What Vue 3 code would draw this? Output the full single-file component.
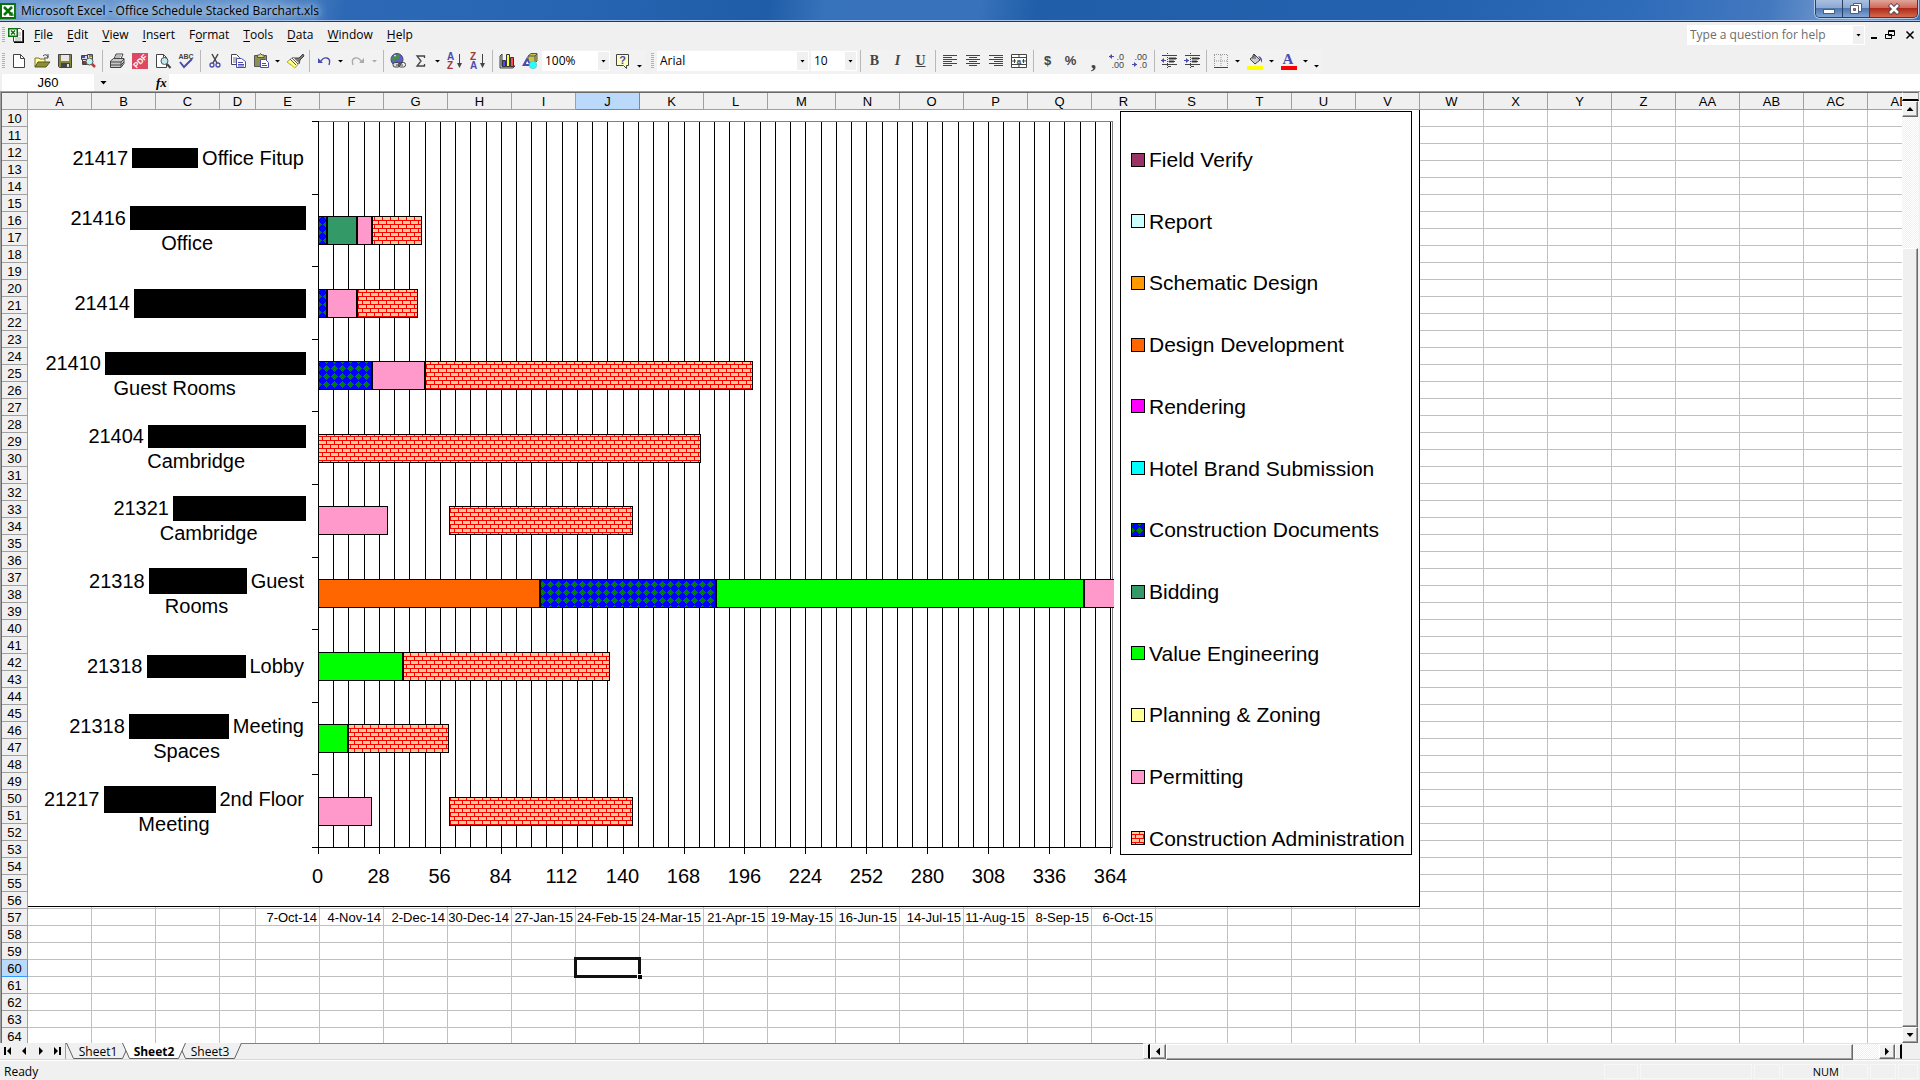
<script setup>
import { ref } from 'vue'

const icons = {
  blank: '<path d="M2.5 1.500h7l4 4v9h-11z" fill="#fff" stroke="#444"/><path d="M9.500 1.500v4h4" fill="none" stroke="#444"/>',
  open: '<path d="M1 14V5h4l1 1h5v3" fill="#ffff9c" stroke="#77772a"/><path d="M1 14l3-5h12l-4 5z" fill="#8e8e33" stroke="#55551f"/><path d="M9 3q3-3 5 1M14 1v4h-4" fill="none" stroke="#444"/>',
  save: '<path d="M1.500 1.500h13v13h-12l-1-1z" fill="#85853b" stroke="#444"/><path d="M4 2h8v6H4z" fill="#e8e8e8"/><path d="M4 10h9v4H4z" fill="#444"/><path d="M10 11h2v3h-2z" fill="#ddd"/>',
  research: '<path d="M1.500 2.500h6v4h-6zM7.500 1.500h5v5h-5zM2.500 6.500h5v5h-5z" fill="#ddd" stroke="#444"/><path d="M2 3h3v2H2z" fill="#4b4bb0"/><path d="M9 2h3v2H9z" fill="#8e8e33"/><path d="M3 8h3v3H3z" fill="#933"/><circle cx="9.500" cy="8.500" r="3.500" fill="#b9f4f8" stroke="#555"/><path d="M12 11l3 3" stroke="#c33" stroke-width="2.500"/>',
  print: '<path d="M5 6l2-5h7l-2 5" fill="#fff" stroke="#444"/><path d="M7 3h5M6 5h5" stroke="#777"/><path d="M1.500 8l3-2.500h10.500v5L12 14.500H1.500z" fill="#c9c9c9" stroke="#444"/><path d="M2 9h10l3-3M2 12h10l3-3M12 9v5" fill="none" stroke="#444"/><path d="M8 10.500h3" stroke="#dd0"/>',
  pdf: '<path d="M0 0h16v16H0z" fill="#dc4a62"/><text x="8" y="11" text-anchor="middle" font-family="Liberation Sans,sans-serif" font-weight="700" font-size="8" fill="#fff" transform="rotate(-45 8 8)">PDF</text>',
  preview: '<path d="M1.500 1.500h7l3 3v10h-10z" fill="#fff" stroke="#444"/><path d="M8.500 1.500v3h3" fill="none" stroke="#444"/><circle cx="9.500" cy="8" r="3.500" fill="#bfe9ec" stroke="#555"/><path d="M12 11l3.500 4" stroke="#444" stroke-width="2"/>',
  spell: '<text x="8" y="6" text-anchor="middle" font-family="Liberation Sans,sans-serif" font-size="7" font-weight="700" fill="#444">ABC</text><path d="M2 9l4 5 8-8" fill="none" stroke="#4b4bb0" stroke-width="2"/>',
  cut: '<path d="M5 1l5 9M11 1l-5 9" stroke="#444" stroke-width="1.500"/><circle cx="5" cy="12" r="2" fill="none" stroke="#4b4bb0" stroke-width="1.300"/><circle cx="11" cy="12" r="2" fill="none" stroke="#4b4bb0" stroke-width="1.300"/>',
  copy: '<path d="M1.500 1.500h5l3 3v7h-8z" fill="#fff" stroke="#444"/><path d="M3 5h4M3 7h4M3 9h4" stroke="#777"/><path d="M6.500 5.500h5l4 3v6h-9z" fill="#fff" stroke="#4b4bb0"/><path d="M8 9.500h5M8 11.500h6M8 13h6" stroke="#4b4bb0"/>',
  paste: '<path d="M1.500 2.500h12v11h-12z" fill="#8e8e5a" stroke="#555"/><path d="M4.500 4.500V2h2l1-1.500L9 2h2v2.500z" fill="#dd8" stroke="#555"/><path d="M7.500 6.500h5l3 3v5h-8z" fill="#fff" stroke="#4b4bb0"/><path d="M9 10.500h4M9 12.500h5" stroke="#4b4bb0"/>',
  brush: '<path d="M16 1l-4 4-2 0-4 0 6 6 1-4 4-4z" fill="#777" stroke="#444"/><path d="M6 4l6 6-4 5-8-6z" fill="#ffffb0" stroke="#998"/><path d="M5 5l6 6M3 6l6 6" stroke="#555"/><path d="M1 9l7 6" stroke="#ee0" stroke-dasharray="1 1" stroke-width="2"/>',
  undo: '<path d="M4 9.500Q7 4 11 5t2 7" fill="none" stroke="#4b4bb0" stroke-width="1.400"/><path d="M2 5l5 5H2z" fill="#4b4bb0"/>',
  redo: '<path d="M12 9.500Q9 4 5 5t-2 7" fill="none" stroke="#aaa" stroke-width="1.400"/><path d="M14 5l-5 5h5z" fill="#aaa"/>',
  link: '<circle cx="7" cy="6.500" r="6" fill="#5b5be0" stroke="#446"/><path d="M4 2l5-1 1 3-2 3-2-1-2 3-3-3z" fill="#4a8a4a"/><path d="M4 3q1-1 2 0" stroke="#fff"/><rect x="3" y="9.500" width="7" height="4.500" rx="2" fill="#ddd" stroke="#444"/><rect x="8.500" y="9.500" width="7" height="4.500" rx="2" fill="none" stroke="#444"/><path d="M6 12h7" stroke="#444"/>',
  sum: '<path d="M11.500 5V3H4l4 5-4 5h7.500v-2" fill="none" stroke="#444" stroke-width="1.300"/>',
  sortAz: '<g font-family="Liberation Sans,sans-serif" font-weight="700" font-size="10"><text x="0" y="7" fill="#4b4bb0">A</text><text x="0" y="16" fill="#a03a3a">Z</text></g><path d="M12.500 1v12" stroke="#444"/><path d="M10 10h5l-2.500 5z" fill="#444"/>',
  sortZa: '<g font-family="Liberation Sans,sans-serif" font-weight="700" font-size="10"><text x="0" y="7" fill="#a03a3a">Z</text><text x="0" y="16" fill="#4b4bb0">A</text></g><path d="M12.500 1v12" stroke="#444"/><path d="M10 10h5l-2.500 5z" fill="#444"/>',
  chart: '<path d="M1 3l2-2v12h13l-2 2H1z" fill="#bbb" stroke="#444"/><path d="M3.500 7.500h3v6h-3z" fill="#4b4bff" stroke="#333"/><path d="M7.500 1.500h3v12h-3z" fill="#ff3" stroke="#333"/><path d="M11.500 4.500h3v9h-3z" fill="#ff4b4b" stroke="#333"/>',
  drawing: '<path d="M6 3l3-2.500h6V8l-2 2H6z" fill="#c5c54a" stroke="#555"/><path d="M6 3h7v7M13 3l2-2" fill="none" stroke="#555"/><path d="M0 13L5 4l5 9z" fill="#4b4bb0"/><path d="M4 11l1-3 2 3z" fill="#fff"/><circle cx="11" cy="12" r="3.800" fill="#2ff" stroke="#999" stroke-width=".5"/>',
  help: '<path d="M1.500 1.500h12v11h-2v3l-3-3h-7z" fill="#ffffc0" stroke="#444"/><text x="7.500" y="11" text-anchor="middle" font-family="Liberation Sans,sans-serif" font-weight="700" font-size="11" fill="#4b4bb0">?</text>',
  left: '<path d="M1 2.500h14M1 4.500h9M1 6.500h14M1 8.500h9M1 10.500h14M1 12.500h9" stroke="#444"/>',
  center: '<path d="M1 2.500h14M4 4.500h8M1 6.500h14M4 8.500h8M1 10.500h14M4 12.500h8" stroke="#444"/>',
  right: '<path d="M1 2.500h14M6 4.500h9M1 6.500h14M6 8.500h9M1 10.500h14M6 12.500h9" stroke="#444"/>',
  merge: '<path d="M.5 1.500h15v13H.5zM.5 4.500h15M.5 11.500h15M8 1v3M8 12v3" fill="#fff" stroke="#444"/><path d="M1 8h4M11 8h4M3.500 6v4M12.500 6v4" stroke="#444"/><text x="8" y="10.500" text-anchor="middle" font-family="Liberation Sans,sans-serif" font-size="8" font-weight="700" fill="#444">a</text>',
  moreDec: '<path d="M0 3.500h5" stroke="#4b4bb0"/><path d="M3 1v5L0 3.500z" fill="#4b4bb0"/><g font-family="Liberation Sans,sans-serif" font-size="9" fill="#444"><text x="15" y="7" text-anchor="end">.0</text><text x="15" y="15" text-anchor="end">.00</text></g>',
  lessDec: '<path d="M0 11.500h5" stroke="#4b4bb0"/><path d="M2 9v5l3-2.500z" fill="#4b4bb0"/><g font-family="Liberation Sans,sans-serif" font-size="9" fill="#444"><text x="15" y="7" text-anchor="end">.00</text><text x="15" y="15" text-anchor="end">.0</text></g>',
  outdent: '<path d="M1 2.500h15M8 5.500h8M8 8.500h6M1 11.500h15M7 13.500h3" stroke="#444"/><path d="M8 5h7v1H8zM8 8h5v1H8z" stroke="#444"/><path d="M6.500 0v16" stroke="#444" stroke-dasharray="1 1"/><path d="M0 7.500h5" stroke="#4b4bb0"/><path d="M3 5v5L0 7.500z" fill="#4b4bb0"/>',
  indent: '<path d="M1 2.500h15M8 5.500h8M8 8.500h6M1 11.500h15M7 13.500h3" stroke="#444"/><path d="M8 5h7v1H8zM8 8h5v1H8z" stroke="#444"/><path d="M6.500 0v16" stroke="#444" stroke-dasharray="1 1"/><path d="M0 7.500h5" stroke="#4b4bb0"/><path d="M2 5v5l3-2.500z" fill="#4b4bb0"/>',
  border: '<path d="M1.500 2v12M8 2v12M14.500 2v12M1 1.500h14M1 8h14" stroke="#999" stroke-dasharray="1 1"/><path d="M1 14.500h14" stroke="#444"/>',
  fill: '<path d="M3 6l5-4 5 5-5 4z" fill="#ccc" stroke="#444"/><path d="M6 6V2q1-2 2 0v4" fill="none" stroke="#444"/><path d="M11 3q5 1 4 7l-2-4z" fill="#4b4bb0"/><path d="M0 13h16v4H0z" fill="#ff0"/>',
  fontColor: '<text x="7" y="11" text-anchor="middle" font-family="Liberation Serif,serif" font-weight="700" font-size="15" fill="#4b4bb0">A</text><path d="M0 13h16v4H0z" fill="#f00"/>',
  excel: '<path d="M0 0h16v16H0z" fill="#0a700a"/><path d="M2 2h12v12H2z" fill="#fff"/><path d="M4 4l8 8M12 4l-8 8" stroke="#0a700a" stroke-width="2.500"/><path d="M9 12h5M12 9v4" stroke="#0a700a"/>',
  workbook: '<path d="M6 3h10v13H6z" fill="#000"/><path d="M5.500 1.500h7l2 2v11h-9z" fill="#fff" stroke="#444"/><path d="M10 6h3M10 8h3M7 11h6M7 13h6" stroke="#aaa"/><path d="M0 1h10v9H0z" fill="#0a700a"/><path d="M1.500 2.500h7v6h-7z" fill="#fff"/><path d="M3 3.500l4 4M7 3.500l-4 4" stroke="#0a700a" stroke-width="1.500"/>'
}

const b = (label, icon) => ({ kind: 'icon', label, icon })
const t = (label, text, cls) => ({ kind: 'text', label, text, cls })
const more = (label, cls = '') => ({ kind: 'more', label, cls })
const sep = { kind: 'sep' }
const combo = (label, value, cls) => ({ kind: 'combo', label, value, cls })

const standardBar = [
  b('New', 'blank'), b('Open', 'open'), b('Save', 'save'), b('Search', 'research'), sep,
  b('Print', 'print'), b('Convert to PDF', 'pdf'), b('Print Preview', 'preview'), b('Spelling', 'spell'), sep,
  b('Cut', 'cut'), b('Copy', 'copy'), b('Paste', 'paste'), more('Paste options'), b('Format Painter', 'brush'), sep,
  b('Undo', 'undo'), more('Undo list'), b('Redo', 'redo'), more('Redo list', 'dim'), sep,
  b('Insert Hyperlink', 'link'), b('AutoSum', 'sum'), more('AutoSum options'), b('Sort Ascending', 'sortAz'), b('Sort Descending', 'sortZa'), sep,
  b('Chart Wizard', 'chart'), b('Drawing', 'drawing'), combo('Zoom', '100%', 'zoom'), b('Help', 'help'), more('Toolbar options', 'low')
]
const formatBar = [
  combo('Font', 'Arial', 'font'), combo('Font Size', '10', 'size'), sep,
  t('Bold', 'B', ''), t('Italic', 'I', 'it'), t('Underline', 'U', 'un'), sep,
  b('Align Left', 'left'), b('Center', 'center'), b('Align Right', 'right'), b('Merge and Center', 'merge'), sep,
  t('Currency Style', '$', 'sans'), t('Percent Style', '%', 'sans'), t('Comma Style', ',', 'comma'),
  b('Increase Decimal', 'moreDec'), b('Decrease Decimal', 'lessDec'), sep,
  b('Decrease Indent', 'outdent'), b('Increase Indent', 'indent'), sep,
  b('Borders', 'border'), more('Border options'), b('Fill Color', 'fill'), more('Fill colors'),
  b('Font Color', 'fontColor'), more('Font colors'), more('Toolbar options', 'low')
]

const menus = [
  ['', 'F', 'ile'], ['', 'E', 'dit'], ['', 'V', 'iew'], ['', 'I', 'nsert'], ['F', 'o', 'rmat'],
  ['', 'T', 'ools'], ['', 'D', 'ata'], ['', 'W', 'indow'], ['', 'H', 'elp']
]

const names = [...'ABCDEFGHIJKLMNOPQRSTUVWXYZ', 'AA', 'AB', 'AC', 'AD']
const widths = { D: 36, M: 68, S: 72 }
const columns = names.map(name => ({ name, width: widths[name] || 64 }))
const tableWidth = 26 + columns.reduce((sum, c) => sum + c.width, 0)
const rows = Array.from({ length: 55 }, (_, i) => i + 10)
const dates = ['7-Oct-14', '4-Nov-14', '2-Dec-14', '30-Dec-14', '27-Jan-15', '24-Feb-15', '24-Mar-15',
  '21-Apr-15', '19-May-15', '16-Jun-15', '14-Jul-15', '11-Aug-15', '8-Sep-15', '6-Oct-15']
const cellText = (row, col) => (row === 57 && col >= 4 ? dates[col - 4] || '' : '')

const legend = [
  ['Field Verify', '#993366'], ['Report', '#ccffff'], ['Schematic Design', '#ff9900'],
  ['Design Development', '#ff6600'], ['Rendering', '#ff00ff'], ['Hotel Brand Submission', '#00ffff'],
  ['Construction Documents', 'url(#diamond)'], ['Bidding', '#339966'], ['Value Engineering', '#00ff00'],
  ['Planning & Zoning', '#ffff99'], ['Permitting', '#ff99cc'], ['Construction Administration', 'url(#brick)']
]
const DD = '#ff6600', CD = 'url(#diamond)', BID = '#339966', VE = '#00ff00', PER = '#ff99cc', CA = 'url(#brick)'

// Each segment is [start day, end day, fill].
const projects = [
  { id: '21417', mask: [66, 20], tail: 'Office Fitup', segs: [] },
  { id: '21416', mask: [176, 24], second: 'Office', segs: [[0, 4, CD], [4, 18, BID], [18, 25, PER], [25, 48, CA]] },
  { id: '21414', mask: [172, 29], segs: [[0, 4, CD], [4, 18, PER], [18, 46, CA]] },
  { id: '21410', mask: [201, 23], second: 'Guest Rooms', segs: [[0, 25, CD], [25, 49, PER], [49, 200, CA]] },
  { id: '21404', mask: [158, 23], second: 'Cambridge', segs: [[0, 176, CA]] },
  { id: '21321', mask: [133, 25], second: 'Cambridge', segs: [[0, 32, PER], [60, 145, CA]] },
  { id: '21318', mask: [98, 26], tail: 'Guest', second: 'Rooms', segs: [[0, 102, DD], [102, 183, CD], [183, 352, VE], [352, 370, PER]] },
  { id: '21318', mask: [99, 23], tail: 'Lobby', segs: [[0, 39, VE], [39, 134, CA]] },
  { id: '21318', mask: [100, 25], tail: 'Meeting', second: 'Spaces', segs: [[0, 14, VE], [14, 60, CA]] },
  { id: '21217', mask: [112, 27], tail: '2nd Floor', second: 'Meeting', segs: [[0, 25, PER], [60, 145, CA]] }
]
const dayX = d => Math.round(d * 792 / 364)
const rowY = i => Math.round(i * 72.6)
const bars = projects.flatMap((p, i) => p.segs.map(([a, z, fill]) => {
  const x = dayX(a)
  return { x, y: rowY(i + 0.5) - 14, w: dayX(z) - 1 - x, fill }
}))
const gridDays = Array.from({ length: 53 }, (_, i) => i * 7)
const majorDays = gridDays.filter(d => d % 28 === 0)

const sheets = ['Sheet1', 'Sheet2', 'Sheet3']
const active = ref('Sheet2')
</script>

<template>
  <div class="app">
    <header class="title">
      <svg class="ico" viewBox="0 0 16 16" v-html="icons.excel"></svg>
      <h1>Microsoft Excel - Office Schedule Stacked Barchart.xls</h1>
      <div class="caption">
        <button aria-label="Minimize"><svg width="14" height="12"><rect x="1.500" y="6.500" width="11" height="4" fill="#fff" stroke="#555b70" /></svg></button>
        <button aria-label="Restore"><svg width="14" height="13"><path d="M4.500 1.500h8v8h-8z" fill="#fff" stroke="#555b70" /><path d="M1.500 3.500h8v8h-8z" fill="#fff" stroke="#555b70" /><path d="M4.500 6.500h2v2h-2z" fill="#6c8fc0" stroke="#555b70" /></svg></button>
        <button class="close" aria-label="Close"><svg width="14" height="12"><path d="M2.500 1.500l9 9M11.500 1.500l-9 9" stroke="#55404a" stroke-width="4.500" /><path d="M3 2l8 8M11 2l-8 8" stroke="#fff" stroke-width="2.500" /></svg></button>
      </div>
    </header>

    <nav class="menubar">
      <i class="grip"></i>
      <svg class="ico" viewBox="0 0 16 16" v-html="icons.workbook"></svg>
      <button v-for="m in menus" :key="m.join('')">{{ m[0] }}<u>{{ m[1] }}</u>{{ m[2] }}</button>
      <div class="ask">
        <input aria-label="Type a question for help" placeholder="Type a question for help">
        <button aria-label="Recent questions"><i class="tri"></i></button>
      </div>
      <div class="mdi">
        <button aria-label="Minimize workbook"><svg width="10" height="10"><path d="M2 7h6v2H2z" /></svg></button>
        <button aria-label="Restore workbook"><svg width="10" height="10"><path d="M3.500.5h6v5h-6zM3 1.500h7M.5 4.500h6v4h-6zM0 4.500h7" fill="#f0f0f0" stroke="#000" /></svg></button>
        <button aria-label="Close workbook"><svg width="10" height="10"><path d="M1.500 1.500l7 7M8.500 1.500l-7 7" stroke="#000" stroke-width="1.500" /></svg></button>
      </div>
    </nav>

    <div class="toolbars">
      <div v-for="(bar, n) in [standardBar, formatBar]" :key="n" class="toolbar">
        <i class="grip"></i>
        <template v-for="(item, i) in bar" :key="i">
          <i v-if="item.kind === 'sep'" class="sep"></i>
          <button v-else-if="item.kind === 'icon'" class="tool" :aria-label="item.label">
            <svg class="ico" viewBox="0 0 16 16" v-html="icons[item.icon]"></svg>
          </button>
          <button v-else-if="item.kind === 'text'" class="tool letter" :class="item.cls" :aria-label="item.label">{{ item.text }}</button>
          <button v-else-if="item.kind === 'more'" class="more" :class="item.cls" :aria-label="item.label"><i class="tri"></i></button>
          <label v-else class="combo" :class="item.cls">
            <select :aria-label="item.label"><option>{{ item.value }}</option></select>
            <span><i class="tri"></i></span>
          </label>
        </template>
      </div>
    </div>

    <div class="formula">
      <input class="name" aria-label="Name Box" value="J60">
      <button class="drop" aria-label="Name list"><i class="tri wide"></i></button>
      <button class="fx" aria-label="Insert Function">fx</button>
      <input class="entry" aria-label="Formula">
    </div>

    <main class="work">
      <div class="pane">
        <table :style="{ width: tableWidth + 'px' }">
          <colgroup>
            <col class="rowcol">
            <col v-for="c in columns" :key="c.name" :style="{ width: c.width + 'px' }">
          </colgroup>
          <thead>
            <tr>
              <th></th>
              <th v-for="c in columns" :key="c.name" :class="{ on: c.name === 'J' }" scope="col">{{ c.name }}</th>
            </tr>
          </thead>
          <tbody>
            <tr v-for="r in rows" :key="r">
              <th :class="{ on: r === 60 }" scope="row">{{ r }}</th>
              <td v-for="(c, i) in columns" :key="c.name" :class="{ cursor: r === 60 && c.name === 'J' }">{{ cellText(r, i) }}</td>
            </tr>
          </tbody>
        </table>

        <section class="chart">
          <div class="labels">
            <div v-for="(p, i) in projects" :key="i" class="project">
              <div>
                <div class="line" :class="{ bare: !p.tail }">
                  <span>{{ p.id }}</span>
                  <i class="mask" :style="{ width: p.mask[0] + 'px', height: p.mask[1] + 'px' }"></i>
                  <span v-if="p.tail">{{ p.tail }}</span>
                </div>
                <div v-if="p.second" class="second">{{ p.second }}</div>
              </div>
            </div>
          </div>
          <div class="plot">
            <svg width="802" height="733" viewBox="-6 0 802 733" shape-rendering="crispEdges">
              <defs>
                <pattern id="brick" width="8" height="8" patternUnits="userSpaceOnUse">
                  <path d="M0 0h8v8H0z" fill="#ffcc99" />
                  <path d="M0 3h8v1H0zM0 7h8v1H0zM0 0h1v3H0zM4 4h1v3H4z" fill="#f00" />
                </pattern>
                <pattern id="diamond" x="-3" y="4" width="8" height="8" patternUnits="userSpaceOnUse">
                  <path d="M0 0h8v8H0z" fill="#00f" />
                  <path d="M3 0h1v1H3zM2 1h3v1H2zM1 2h5v1H1zM0 3h7v1H0zM1 4h5v1H1zM2 5h3v1H2zM3 6h1v1H3z" fill="#008000" />
                </pattern>
              </defs>
              <path d="M0 0h795v727h-1V1H0z" fill="#808080" />
              <rect v-for="d in gridDays" :key="d" :x="dayX(d)" :y="d ? 1 : 0" width="1" height="726" />
              <rect v-for="d in majorDays" :key="'m' + d" :x="dayX(d)" y="726" width="1" height="7" />
              <rect v-for="n in 11" :key="'t' + n" x="-6" :y="rowY(n - 1)" width="6" height="1" />
              <rect x="0" y="726" width="794" height="1" />
              <rect v-for="(s, i) in bars" :key="'b' + i" :x="s.x + 0.5" :y="s.y + 0.5" :width="s.w" height="28" :fill="s.fill" stroke="#000" />
            </svg>
            <div class="axis"><span v-for="d in majorDays" :key="d">{{ d }}</span></div>
          </div>
          <ul class="legend">
            <li v-for="[name, fill] in legend" :key="name">
              <svg width="14" height="14"><rect x=".5" y=".5" width="13" height="13" :fill="fill" stroke="#000" /></svg>{{ name }}
            </li>
          </ul>
        </section>
      </div>

      <div class="vscroll">
        <i class="split"></i>
        <button aria-label="Scroll up"><i class="tri up"></i></button>
        <i class="track"></i>
        <i class="thumb"></i>
        <button aria-label="Scroll down"><i class="tri down"></i></button>
      </div>
    </main>

    <div class="tabrow">
      <div class="nav">
        <button aria-label="First sheet"><svg width="8" height="8"><path d="M0 0h2v8H0zM7 0v8L3 4z" /></svg></button>
        <button aria-label="Previous sheet"><svg width="8" height="8"><path d="M6 0v8L2 4z" /></svg></button>
        <button aria-label="Next sheet"><svg width="8" height="8"><path d="M2 0v8l4-4z" /></svg></button>
        <button aria-label="Last sheet"><svg width="8" height="8"><path d="M6 0h2v8H6zM1 0v8l4-4z" /></svg></button>
      </div>
      <div class="tabs">
        <button v-for="s in sheets" :key="s" :class="{ active: s === active }" @click="active = s">
          <svg viewBox="0 0 64 16"><path d="M.5 0L7.500 15.500h49L63.500 0" /></svg><span>{{ s }}</span>
        </button>
      </div>
      <div class="hscroll">
        <i class="split"></i>
        <button aria-label="Scroll left"><i class="tri lt"></i></button>
        <i class="thumb"></i>
        <i class="track"></i>
        <button aria-label="Scroll right"><i class="tri rt"></i></button>
        <i class="split end"></i>
      </div>
      <i class="corner"></i>
    </div>

    <footer class="status">
      <span class="ready">Ready</span>
      <i class="p34"></i><i class="p112"></i><i class="p26"></i><span class="num">NUM</span><i class="p26"></i><i class="p26"></i><i class="p20"></i>
    </footer>
  </div>
</template>

<style>
body { margin: 0; overflow: hidden; }
</style>

<style scoped>
.app {
  display: flex; flex-direction: column; height: 100vh; overflow: hidden;
  background: #f0f0f0; color: #000; font: 12px/16px "Open Sans", "Noto Sans", sans-serif;
}
.app *, .app *::before { box-sizing: border-box; }
button { padding: 0; border: 0; background: none; color: inherit; font: inherit; }
input, select { border: 0; border-radius: 0; outline: 0; font: inherit; color: inherit; background: #fff; min-width: 0; }
svg { display: block; flex: none; }
.ico { width: 16px; height: 16px; overflow: visible; }
i { display: block; flex: none; }

.title {
  display: flex; align-items: center; flex: none; height: 22px; gap: 5px;
  border-bottom: 1px solid #1d3a63; box-shadow: inset 0 -1px #a9c3e6;
  background: linear-gradient(100deg, #6d9bd0 0, #5f90ca 14%, #2c68b5 18%, #2866b4 28%, #205da8 40%, #3773bb 43%, #3772ba 51%, #205ea9 54%, #2462b0 75%, #2e6bb9 85%, #4378bf 92%, #83a4d4 97%, #3f70b4 100%);
}
.title h1 {
  flex: 1; margin: 0; font-size: 12px; font-weight: 400; white-space: nowrap; line-height: 20px;
  text-shadow: 0 0 8px #c5d8f0, 0 0 8px #c5d8f0, 0 0 12px #b5cdea;
}
.caption { display: flex; align-self: flex-start; height: 18px; margin-right: 2px; border: 1px solid #2b3f63; border-top: 0; border-radius: 0 0 5px 5px; box-shadow: 0 0 0 1px #b4cae8; overflow: hidden; }
.caption button { display: flex; align-items: center; justify-content: center; width: 27px; border-right: 1px solid #2b3f63; background: linear-gradient(#a9c0e0, #8ca9d3 45%, #5077ae 50%, #7fa6d6); }
.caption .close { width: 47px; border: 0; background: linear-gradient(#e0a59a, #cf6a5a 45%, #b02a1a 50%, #d56a4a); }

.menubar { display: flex; align-items: center; flex: none; height: 28px; padding: 0 0 2px 2px; }
.grip { width: 3px; height: 16px; background: repeating-linear-gradient(#b4b4b4 0 1px, #f0f0f0 1px 2px); }
.menubar .ico { margin: 0 3px 0 3px; }
.menubar > button { padding: 0 7px; height: 20px; }
u { text-underline-offset: 2px; }
.ask { display: flex; margin: 0 4px 0 auto; width: 178px; height: 20px; padding: 1px; background: #fff; }
.ask input { flex: 1; padding: 0 2px; }
.ask input::placeholder { color: #6d6d6d; opacity: 1; }
.ask button { width: 11px; background: #f0f0f0; }
.mdi { display: flex; gap: 10px; padding-right: 5px; }
.mdi button:first-child { margin-right: -4px; }

.tri { width: 5px; height: 3px; margin: auto; background: #000; clip-path: polygon(0 0, 100% 0, 50% 100%); }
.tri.wide { width: 7px; height: 4px; }
.toolbars { display: flex; flex: none; height: 24px; gap: 6px; }
.toolbar { display: flex; align-items: center; padding-bottom: 2px; background: #f2f2f2; }
.toolbar .grip { margin: 0 2px; }
.toolbar:last-child .grip { margin: 0 3px 0 0; }
.sep { width: 6px; height: 22px; background: linear-gradient(#b8b8b8, #b8b8b8) 3px 0 / 1px 100% no-repeat; }
.tool { display: flex; align-items: center; justify-content: center; flex: none; width: 23px; height: 22px; }
.more { flex: none; width: 11px; height: 22px; }
.more .tri { width: 6px; }
.more.dim .tri { background: #aaa; }
.more.low { padding-top: 10px; }
.letter { color: #444; font: 700 14px/22px "Liberation Serif", serif; }
.letter.it { font-style: italic; }
.letter.un { text-decoration: underline; }
.letter.sans { font: 700 13px/22px "Liberation Sans", sans-serif; }
.letter.comma { font-size: 22px; line-height: 14px; }
.combo { position: relative; display: flex; flex: none; height: 20px; padding: 1px; margin-right: 2px; background: #fff; }
.combo select { flex: 1; appearance: none; padding: 0 2px; }
.combo span { display: flex; width: 11px; background: #f0f0f0; }
.zoom { width: 68px; margin: 0 1px; }
.font { width: 152px; }
.size { width: 46px; margin-right: 0; }

.formula { display: flex; flex: none; height: 17px; padding-left: 2px; font: 13px/17px "Liberation Sans", Arial, sans-serif; }
.name { width: 92px; padding: 0; text-align: center; }
.drop { width: 19px; }
.fx { width: 56px; padding-left: 43px; text-align: left; font: italic 700 13px/16px "Liberation Serif", serif; }
.entry { flex: 1; }

.work { display: flex; flex: 1; min-height: 0; border-top: 1px solid #a0a0a0; padding-right: 1px; }
.pane { position: relative; flex: 1; min-width: 0; overflow: hidden; background: #fff; border: solid #696969; border-width: 1px 0 0 1px; box-shadow: -1px 0 #a0a0a0; margin-left: 1px; }
table { table-layout: fixed; border-collapse: separate; border-spacing: 0; font: 13px/14px "Liberation Sans", Arial, sans-serif; }
.rowcol { width: 26px; }
th, td { height: 17px; padding: 2px 0 0; font-weight: 400; white-space: nowrap; border: solid #c0c0c0; border-width: 0 1px 1px 0; }
th { background: #f0f0f0; border-color: #a0a0a0; }
td { text-align: right; padding-right: 2px; }
th.on { background: #bbdafb; border-color: #3399ff; }
.cursor { position: relative; }
.cursor::before { content: ""; position: absolute; inset: -3px -2px -2px; border: 3px solid #111; }
.cursor::after { content: ""; position: absolute; right: -3px; bottom: -3px; width: 4px; height: 4px; background: #000; border: solid #fff; border-width: 1px 0 0 1px; }

.chart {
  position: absolute; left: 26px; top: 17px; display: flex; height: 797px;
  padding-right: 7px; background: #fff; border: solid #000; border-width: 0 1px 1px 0;
  font: 20px/25px "Liberation Sans", Arial, sans-serif;
}
.labels { display: flex; flex-direction: column; width: 284px; height: 738px; padding: 12px 8px 0 0; }
.project { display: flex; flex: 1; min-height: 0; align-items: center; justify-content: flex-end; text-align: center; }
.line { display: flex; align-items: center; gap: 4px; height: 25px; white-space: nowrap; }
.line.bare { margin-right: -2px; }
.mask { background: #000; }
.plot { padding-top: 11px; width: 802px; }
.axis { display: flex; width: 854px; margin: 10px 0 0 -25px; }
.axis span { flex: 1; text-align: center; }
.legend {
  display: flex; flex-direction: column; justify-content: space-between; width: 292px; height: 744px;
  margin: 1px 0 0 6px; padding: 35px 0 3px 10px; border: 1px solid #000; background: #fff; list-style: none; z-index: 1;
  font-size: 21px;
}
.legend li { display: flex; align-items: center; gap: 4px; white-space: nowrap; }

.vscroll { display: flex; flex-direction: column; flex: none; width: 17px; background: #f0f0f0; }
.vscroll button, .hscroll button, .thumb { display: block; flex: none; width: 16px; height: 16px; background: #f0f0f0; border: 1px solid; border-color: #fff #696969 #696969 #fff; box-shadow: inset -1px -1px #a0a0a0; }
.vscroll .split { height: 9px; border: 1px solid; border-color: #696969 #a0a0a0 #000 #fff; border-bottom-width: 2px; }
.track { background: repeating-conic-gradient(#fff 0 25%, #f0f0f0 0 50%) 0 0 / 2px 2px; }
.vscroll .track { flex: 131; }
.vscroll .thumb { flex: 778; height: auto; }
.up { width: 7px; height: 4px; clip-path: polygon(50% 0, 100% 100%, 0 100%); }
.down { width: 7px; height: 4px; }
.lt { width: 4px; height: 8px; clip-path: polygon(100% 0, 100% 100%, 0 50%); }
.rt { width: 4px; height: 8px; clip-path: polygon(0 0, 100% 50%, 0 100%); }

.tabrow { display: flex; flex: none; height: 17px; border-bottom: 1px solid #d8d8d8; padding-right: 2px; }
.nav { display: flex; align-items: center; justify-content: space-between; width: 66px; padding: 0 4px; border-right: 1px solid #a0a0a0; }
.tabs { display: flex; flex: 1; border-top: 1px solid #808080; }
.tabs button { position: relative; width: 64px; height: 16px; margin: -1px -8px 0 0; line-height: 15px; }
.tabs svg { position: absolute; left: 0; top: 0; width: 64px; height: 16px; fill: #f0f0f0; stroke: #606060; }
.tabs span { position: relative; }
.tabs .active { z-index: 1; font-weight: 700; }
.tabs .active svg { fill: #fff; }
.hscroll { display: flex; flex: 0 0 759px; border-top: 1px solid #e3e3e3; }
.hscroll .split { width: 7px; border: 1px solid; border-color: #fff #000 #a0a0a0 #fff; border-right-width: 2px; }
.hscroll .thumb { flex: 687; width: auto; }
.hscroll .track { flex: 26; }
.hscroll button { height: 15px; }
.corner { width: 16px; }

.status { display: flex; align-items: center; flex: none; height: 20px; gap: 2px; padding: 2px 2px 0 4px; border-top: 1px solid #fff; }
.ready { margin-right: auto; }
.status i, .num { height: 15px; border: 1px solid #f7f7f7; }
.num { width: 58px; text-align: right; line-height: 14px; font-size: 11px; }
.p34 { width: 34px; }
.p112 { width: 112px; }
.p26 { width: 26px; }
.p20 { width: 20px; }
</style>
